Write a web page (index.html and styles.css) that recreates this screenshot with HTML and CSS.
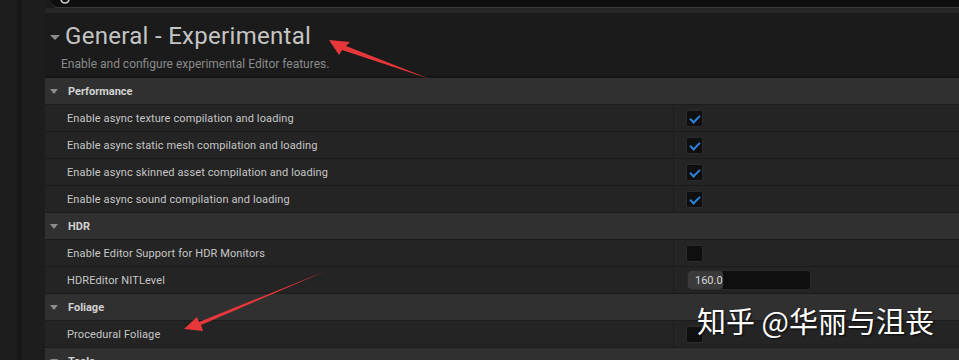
FILE: index.html
```html
<!DOCTYPE html>
<html lang="en">
<head>
  <meta charset="UTF-8">
  <title>Editor Preferences - Experimental</title>
  <link rel="stylesheet" href="styles.css">
</head>
<body>

  <div class="app">
    <div class="sidebar"><div class="sidebar-line"></div></div>

    <div class="panel">
      <div class="search">
        <svg class="search-icon" width="12" height="12" viewBox="0 0 12 12">
          <circle cx="5" cy="2" r="4" fill="none" stroke="#cfcfcf" stroke-width="1.6"/>
        </svg>
      </div>
      <div class="search-gap"></div>

      <div class="section-head">
        <h1><span class="tri big"></span>General - Experimental</h1>
        <p>Enable and configure experimental Editor features.</p>
      </div>

      <div class="category"><span class="tri"></span>Performance</div>
      <div class="row">
        <div class="name">Enable async texture compilation and loading</div>
        <div class="value"><span class="check on"></span></div>
      </div>
      <div class="row">
        <div class="name">Enable async static mesh compilation and loading</div>
        <div class="value"><span class="check on"></span></div>
      </div>
      <div class="row">
        <div class="name">Enable async skinned asset compilation and loading</div>
        <div class="value"><span class="check on"></span></div>
      </div>
      <div class="row">
        <div class="name">Enable async sound compilation and loading</div>
        <div class="value"><span class="check on"></span></div>
      </div>

      <div class="category"><span class="tri"></span>HDR</div>
      <div class="row">
        <div class="name">Enable Editor Support for HDR Monitors</div>
        <div class="value"><span class="check"></span></div>
      </div>
      <div class="row">
        <div class="name">HDREditor NITLevel</div>
        <div class="value">
          <div class="number"><span class="number-fill">160.0</span></div>
        </div>
      </div>

      <div class="category"><span class="tri"></span>Foliage</div>
      <div class="row">
        <div class="name">Procedural Foliage</div>
        <div class="value"><span class="check"></span></div>
      </div>

      <div class="category"><span class="tri"></span>Tools</div>
    </div>
  </div>

  <svg class="annotations" width="959" height="360" viewBox="0 0 959 360">
    <polygon fill="#e8373a" points="329,40 350,42 346,46 430,79 342,50 339,55"/>
    <polygon fill="#e8373a" points="184,329 197,317 199,322 326,271 201,325 203,331"/>
  </svg>

  <div class="watermark">知乎 @华丽与沮丧</div>

</body>
</html>
```

FILE: styles.css
```css
body {
  margin: 0;
  background-color: #1c1c1c;
  font-family: Roboto, "Noto Sans", sans-serif;
  overflow: hidden;
}

.app {
  display: flex;
  width: 959px;
  height: 360px;
  overflow: hidden;
}

.sidebar {
  width: 45px;
  flex-shrink: 0;
  background-color: #1d1d1d;
  display: flex;
  padding-left: 17px;
  box-sizing: border-box;
}

.sidebar-line {
  width: 5px;
  background-color: #171717;
}

.panel {
  flex: 1;
  display: flex;
  flex-direction: column;
  background-color: #1a1a1a;
}

.panel > * {
  flex-shrink: 0;
}

.search {
  height: 7px;
  margin-left: 6px;
  background-color: #0e0e0e;
  border-bottom-left-radius: 7px;
  border-bottom: 1px solid #3a3a3a;
  position: relative;
  overflow: hidden;
}

.search-icon {
  position: absolute;
  left: 9px;
  top: -3px;
}

.search-gap {
  height: 5px;
  background-color: #262626;
}

.section-head {
  height: 65px;
  background-color: #1b1b1b;
  border-bottom: 2px solid #151515;
  padding-left: 5px;
  box-sizing: border-box;
}

.section-head h1 {
  margin: 0;
  padding-top: 9px;
  font-size: 24px;
  font-weight: 400;
  color: #c4c4c4;
  display: flex;
  align-items: center;
  gap: 5px;
  letter-spacing: 0.3px;
}

.section-head p {
  margin: 7px 0 0 11px;
  font-size: 12px;
  color: #8a8a8a;
}

.tri {
  width: 0;
  height: 0;
  border-left: 4px solid transparent;
  border-right: 4px solid transparent;
  border-top: 5px solid #8c8c8c;
  margin: 0 10px 0 5px;
}

.tri.big {
  border-left-width: 5px;
  border-right-width: 5px;
  border-top-width: 5px;
  margin: 2px 0 0 0;
}

.category {
  height: 26px;
  display: flex;
  align-items: center;
  background-color: #303030;
  border-bottom: 1px solid #1c1c1c;
  font-size: 11px;
  font-weight: 700;
  color: #d2d2d2;
}

.row {
  height: 26px;
  display: flex;
  background-color: #242424;
  border-bottom: 1px solid #1b1b1b;
}

.name {
  width: 629px;
  padding-left: 22px;
  box-sizing: border-box;
  display: flex;
  align-items: center;
  font-size: 11px;
  letter-spacing: 0.12px;
  color: #c6c6c6;
  border-right: 1px solid #1c1c1c;
}

.value {
  flex: 1;
  display: flex;
  align-items: center;
  padding-left: 12px;
}

.check {
  width: 17px;
  height: 17px;
  border-radius: 2px;
  background-color: #0f0f0f;
  border: 1px solid #2b2b2b;
  box-sizing: border-box;
  position: relative;
}

.check.on::after {
  content: "";
  position: absolute;
  left: 5px;
  top: 2px;
  width: 4px;
  height: 8px;
  border-right: 2px solid #2f82db;
  border-bottom: 2px solid #2f82db;
  transform: rotate(45deg);
}

.number {
  width: 124px;
  height: 20px;
  margin-left: 1px;
  background-color: #0f0f0f;
  border: 1px solid #2a2a2a;
  border-radius: 3px;
  box-sizing: border-box;
  display: flex;
}

.number-fill {
  width: 35px;
  background-color: #3a3a3a;
  border-radius: 3px;
  font-size: 11px;
  color: #d6d6d6;
  display: flex;
  align-items: center;
  padding-left: 7px;
  box-sizing: border-box;
  white-space: nowrap;
}

.annotations {
  position: absolute;
  left: 0;
  top: 0;
  pointer-events: none;
}

.watermark {
  position: absolute;
  left: 697px;
  top: 299px;
  font-family: "Noto Sans CJK SC", "Noto Sans", sans-serif;
  font-size: 29px;
  color: #ffffff;
  text-shadow: 1px 1px 2px rgba(0, 0, 0, 0.8);
  white-space: nowrap;
}
```
